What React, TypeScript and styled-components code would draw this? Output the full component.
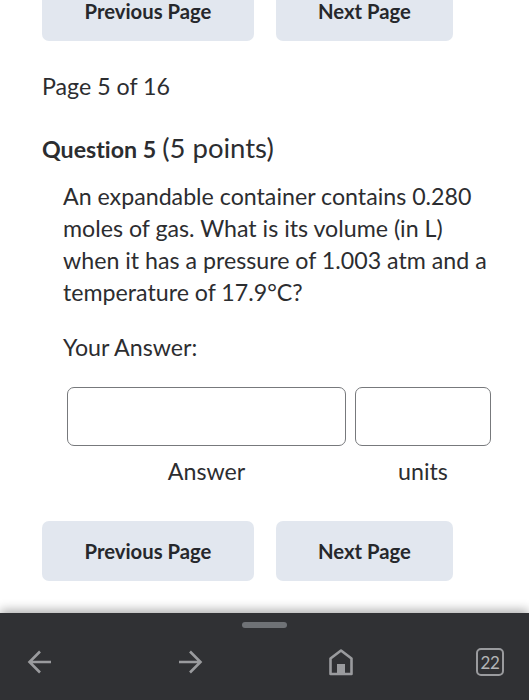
import React from 'react';
import styled, { createGlobalStyle } from 'styled-components';

const GlobalStyle = createGlobalStyle`
  html, body {
    margin: 0;
    padding: 0;
    background: #fff;
  }
  body {
    font-family: Lato, "Open Sans", sans-serif;
    font-variant-ligatures: none;
    color: #2c2d30;
  }
`;

const App: React.FC = () => {
  return (
    <Screen>
      <GlobalStyle />
      <Content>
        <PagerTop>
          <PageButton $width={212}>Previous Page</PageButton>
          <PageButton $width={177}>Next Page</PageButton>
        </PagerTop>
        <PageCount>Page 5 of 16</PageCount>
        <QuestionTitle>
          <strong>Question 5</strong> <Points>(5 points)</Points>
        </QuestionTitle>
        <QuestionBody>
          <Prompt>
            An expandable container contains 0.280
            <br />
            moles of gas. What is its volume (in L)
            <br />
            when it has a pressure of 1.003 atm and a
            <br />
            temperature of 17.9°C?
          </Prompt>
          <YourAnswer>Your Answer:</YourAnswer>
          <Fields>
            <Field $width={279}>
              <Input aria-label="Answer" />
              <FieldLabel>Answer</FieldLabel>
            </Field>
            <Field $width={136}>
              <Input aria-label="units" />
              <FieldLabel>units</FieldLabel>
            </Field>
          </Fields>
        </QuestionBody>
        <Pager>
          <PageButton $width={212}>Previous Page</PageButton>
          <PageButton $width={177}>Next Page</PageButton>
        </Pager>
      </Content>
      <BottomBar>
        <Handle />
        <NavRow>
          <NavIcon width="30" height="30" viewBox="0 0 30 30" aria-label="Back">
            <path d="M26 15H5M15 4.5 4.5 15 15 25.5" />
          </NavIcon>
          <NavIcon width="30" height="30" viewBox="0 0 30 30" aria-label="Forward">
            <path d="M4 15h21M15 4.5 25.5 15 15 25.5" />
          </NavIcon>
          <NavIcon width="30" height="30" viewBox="0 0 30 30" aria-label="Home">
            <path d="M4.5 27V11.5L15 3.5l10.5 8V27Z" strokeLinejoin="round" />
            <rect x="11" y="17" width="8" height="10" fill="#9a9b9e" stroke="none" />
          </NavIcon>
          <TabCount>22</TabCount>
        </NavRow>
      </BottomBar>
    </Screen>
  );
};

const Screen = styled.div`
  width: 529px;
  height: 700px;
  display: flex;
  flex-direction: column;
  overflow: hidden;
`;

const Content = styled.main`
  flex: 1;
  padding: 0 0 0 42px;
  min-height: 0;
`;

const Pager = styled.div`
  display: flex;
  gap: 22px;
  margin-top: 35px;
`;

const PagerTop = styled(Pager)`
  margin-top: -19px;
`;

const PageButton = styled.button<{ $width: number }>`
  width: ${(p) => p.$width}px;
  height: 60px;
  padding: 0;
  border: none;
  border-radius: 7px;
  background: #e2e7ef;
  color: #26282c;
  font-family: inherit;
  font-size: 20.3px;
  font-weight: 700;
`;

const PageCount = styled.div`
  margin-top: 30px;
  font-size: 23.2px;
  line-height: 30px;
`;

const QuestionTitle = styled.h2`
  margin: 30px 0 0;
  font-size: 23.2px;
  line-height: 34px;
  font-weight: 400;

  strong {
    font-weight: 700;
  }
`;

const Points = styled.span`
  font-size: 27.5px;
`;

const QuestionBody = styled.section`
  padding-left: 21px;
`;

const Prompt = styled.p`
  margin: 14px 0 0;
  font-size: 23.2px;
  line-height: 32px;
`;

const YourAnswer = styled.div`
  margin-top: 23px;
  font-size: 23.2px;
  line-height: 32px;
`;

const Fields = styled.div`
  display: flex;
  gap: 9px;
  margin: 24px 0 0 4px;
`;

const Field = styled.label<{ $width: number }>`
  display: flex;
  flex-direction: column;
  width: ${(p) => p.$width}px;
`;

const Input = styled.input`
  box-sizing: border-box;
  width: 100%;
  height: 59px;
  border: 1.5px solid #77797c;
  border-radius: 7px;
  background: #fff;
`;

const FieldLabel = styled.span`
  margin-top: 10px;
  text-align: center;
  font-size: 23.2px;
  line-height: 30px;
`;

const BottomBar = styled.nav`
  position: relative;
  height: 87px;
  flex: none;
  background: #303134;
  box-shadow: 0 -3px 10px rgba(0, 0, 0, 0.32);
`;

const Handle = styled.div`
  width: 45px;
  height: 6px;
  margin: 9px auto 0;
  border-radius: 3px;
  background: #6f7276;
`;

const NavRow = styled.div`
  display: flex;
  align-items: center;
  justify-content: space-between;
  margin-top: 19px;
  padding: 0 25px;
`;

const NavIcon = styled.svg`
  fill: none;
  stroke: #9a9b9e;
  stroke-width: 2.6;
`;

const TabCount = styled.div`
  box-sizing: border-box;
  width: 28px;
  height: 28px;
  display: flex;
  align-items: center;
  justify-content: center;
  border: 2.5px solid #9a9b9e;
  border-radius: 5px;
  color: #b4b5b7;
  font-size: 17px;
  letter-spacing: -0.5px;
`;

export default App;
